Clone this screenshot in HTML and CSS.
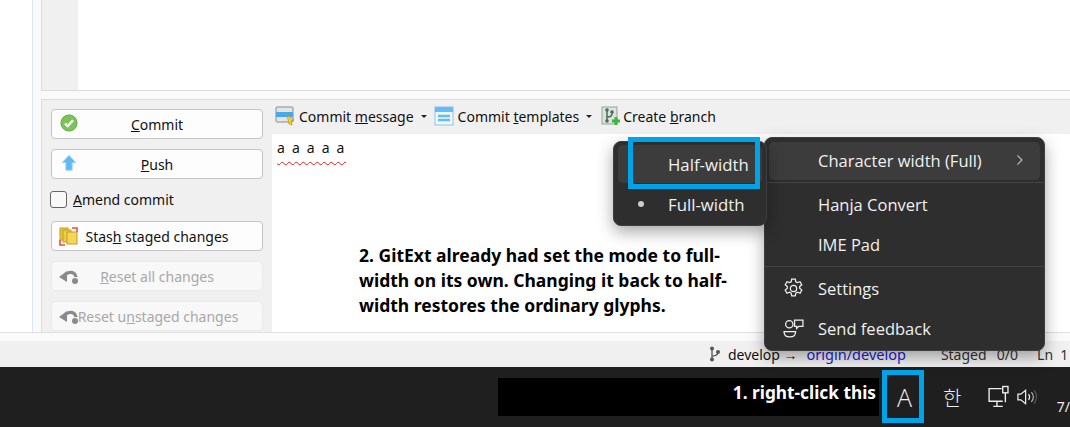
FILE: index.html
```html
<!DOCTYPE html>
<html lang="en">

<head>
    <meta charset="UTF-8">
    <title>GitExt commit form</title>
    <link rel="stylesheet" href="styles.css">
</head>

<body>
    <div class="window">
        <div class="side-strip"></div>
        <div class="main">
            <div class="diff-panel">
                <div class="diff-gutter"></div>
                <div class="diff-body"></div>
            </div>
            <div class="commit-panel">
                <div class="actions">
                    <button class="btn">
                        <svg class="btn-icon" viewBox="0 0 20 20"><circle cx="10" cy="10" r="9" fill="#7cc35a" stroke="#5ea53f"/><path d="M5.500 10.500l3 3 6-6.500" fill="none" stroke="#fff" stroke-width="2.600"/></svg>
                        <span class="btn-label"><u>C</u>ommit</span>
                    </button>
                    <button class="btn">
                        <svg class="btn-icon" viewBox="0 0 20 20"><path d="M10 1.500l7.500 8h-4v8.500h-7v-8.500h-4z" fill="#62b8f5" stroke="#9ad4fb"/></svg>
                        <span class="btn-label"><u>P</u>ush</span>
                    </button>
                    <label class="amend"><span class="check"></span><span><u>A</u>mend commit</span></label>
                    <button class="btn">
                        <svg class="btn-icon wide-icon" viewBox="0 0 20 20"><rect x="1" y="2" width="8" height="12" fill="#e8c53c" stroke="#c39f1e"/><rect x="4" y="4" width="8" height="12" fill="#eccd48" stroke="#c39f1e"/><rect x="8" y="6" width="10" height="12" fill="#f3d755" stroke="#c39f1e"/><path d="M13 2h5v4M1 14v5h5" fill="none" stroke="#ee4a4a" stroke-width="1.600"/></svg>
                        <span class="btn-label">Stas<u>h</u> staged changes</span>
                    </button>
                    <button class="btn disabled">
                        <svg class="btn-icon wide-icon" viewBox="0 0 20 20"><path d="M0 11l8-6v11z" fill="#8a8a8a"/><path d="M7 8c4-3 9-2 10 3" fill="none" stroke="#8a8a8a" stroke-width="3.200"/><circle cx="16" cy="15" r="3" fill="#8a8a8a"/></svg>
                        <span class="btn-label"><u>R</u>eset all changes</span>
                    </button>
                    <button class="btn disabled">
                        <svg class="btn-icon wide-icon" viewBox="0 0 20 20"><path d="M0 11l8-6v11z" fill="#8a8a8a"/><path d="M7 8c4-3 9-2 10 3" fill="none" stroke="#8a8a8a" stroke-width="3.200"/><circle cx="16" cy="15" r="3" fill="#8a8a8a"/></svg>
                        <span class="btn-label reset-label">Reset u<u>n</u>staged changes</span>
                    </button>
                </div>
                <div class="editor">
                    <div class="toolbar">
                        <div class="tool">
                            <svg class="tool-icon" viewBox="0 0 20 20"><rect x="1" y="1" width="17" height="15" rx="1" fill="#e4e4e4" stroke="#8b8b8b"/><rect x="1" y="6" width="17" height="5" fill="#4aa8e8"/><path d="M12 9l7 5-3 1 1 4-3-1z" fill="#f5cf3c" stroke="#a88a17" stroke-width=".6"/></svg>
                            <span>Commit <u>m</u>essage</span>
                            <i class="caret"></i>
                        </div>
                        <div class="tool">
                            <svg class="tool-icon" viewBox="0 0 20 20"><rect x="1" y="1" width="18" height="18" fill="#eef7fe" stroke="#8fc4ea"/><rect x="1" y="1" width="18" height="5" fill="#66bdf6"/><path d="M4 10h12M4 14h12" stroke="#66bdf6" stroke-width="2.500"/></svg>
                            <span>Commit <u>t</u>emplates</span>
                            <i class="caret"></i>
                        </div>
                        <div class="tool tool-branch">
                            <svg class="tool-icon" viewBox="0 0 20 20"><rect x="1" y="1" width="15" height="17" fill="#d9e5dc" stroke="#97a39a"/><path d="M6 4v11M6 11c5 0 5-2 5-4" fill="none" stroke="#4f6b57" stroke-width="1.500"/><circle cx="6" cy="4" r="1.800" fill="#4f6b57"/><circle cx="6" cy="15" r="1.800" fill="#4f6b57"/><circle cx="11" cy="6" r="1.800" fill="#4f6b57"/><path d="M15 11v8M11 15h8" stroke="#3cb53c" stroke-width="3"/></svg>
                            <span>Create <u>b</u>ranch</span>
                        </div>
                    </div>
                    <div class="message"><span class="typed">a a a a a</span></div>
                </div>
            </div>
        </div>
    </div>

    <div class="statusbar">
        <svg class="branch-icon" viewBox="0 0 12 16"><path d="M3 2v12M3 10c5 0 6-2 6-4" fill="none" stroke="#555" stroke-width="1.300"/><circle cx="3" cy="2.500" r="2" fill="#555"/><circle cx="3" cy="13.500" r="2" fill="#555"/><circle cx="9" cy="6" r="2" fill="#555"/></svg>
        <span class="branch">develop →</span>
        <a class="remote">origin/develop</a>
        <span class="staged">Staged&nbsp; 0/0</span>
        <span class="line-no">Ln&nbsp; 1</span>
    </div>

    <div class="taskbar">
        <div class="note-one">1. right-click this</div>
        <div class="tray tray-a">A</div>
        <div class="tray tray-han">한</div>
        <svg class="tray-net" viewBox="0 0 22 22"><path d="M14 3H2v12h13M6 20h9M9.500 15v5" fill="none" stroke="#eee" stroke-width="1.300"/><rect x="15" y="1" width="5" height="6" fill="none" stroke="#eee" stroke-width="1.300"/><path d="M17.500 7v9" stroke="#eee" stroke-width="1.300"/></svg>
        <svg class="tray-vol" viewBox="0 0 22 22"><path d="M2 8h3l5-4v14l-5-4H2z" fill="none" stroke="#eee" stroke-width="1.300"/><path d="M13 8c1.500 2 1.500 4 0 6" fill="none" stroke="#eee" stroke-width="1.300"/><path d="M16 6c2.500 3 2.500 7 0 10" fill="none" stroke="#aaa" stroke-width="1.300"/><path d="M19 4c3 4 3 10 0 14" fill="none" stroke="#555" stroke-width="1.300"/></svg>
        <span class="clock">7/</span>
    </div>

    <!-- IME menus and the notes drawn over the screenshot -->
    <div class="menu context-menu">
        <div class="menu-item active">Character width (Full)
            <svg class="chevron" viewBox="0 0 8 12"><path d="M1.500 1.500l4.500 4.500-4.500 4.500" fill="none" stroke="#bbb" stroke-width="1.100"/></svg>
        </div>
        <div class="menu-line"></div>
        <div class="menu-item">Hanja Convert</div>
        <div class="menu-item">IME Pad</div>
        <div class="menu-line"></div>
        <div class="menu-item">
            <svg class="menu-icon" viewBox="0 0 20 20"><path d="M8.300 1h3.400l.5 2.600 1.500.8 2.500-.9 1.700 3-2 1.700v1.600l2 1.700-1.700 3-2.500-.9-1.500.8-.5 2.600H8.300l-.5-2.600-1.500-.8-2.500.9-1.700-3 2-1.700V8.200l-2-1.700 1.700-3 2.500.9 1.500-.8z" fill="none" stroke="#eee" stroke-width="1.200"/><circle cx="10" cy="10" r="3" fill="none" stroke="#eee" stroke-width="1.200"/></svg>
            Settings
        </div>
        <div class="menu-item">
            <svg class="menu-icon" viewBox="0 0 20 20"><circle cx="6" cy="6" r="3.500" fill="none" stroke="#eee" stroke-width="1.200"/><path d="M11 2h8v6h-4l-2 2V8h-2zM1 13h11c0 3-2 5-5.500 5S1 16 1 13z" fill="none" stroke="#eee" stroke-width="1.200"/></svg>
            Send feedback
        </div>
    </div>

    <div class="menu submenu">
        <div class="menu-item active">Half-width</div>
        <div class="menu-item"><span class="dot"></span>Full-width</div>
    </div>

    <div class="highlight highlight-half"></div>
    <div class="highlight highlight-a"></div>

    <p class="note-two">2. GitExt already had set the mode to full-width on its own. Changing it back to half-width restores the ordinary glyphs.</p>
</body>

</html>
```

FILE: styles.css
```css
html, body {
    margin: 0;
    padding: 0;
}

body {
    width: 1070px;
    height: 427px;
    overflow: hidden;
    position: relative;
    background-color: #fff;
    color: #111;
    font-family: "Noto Sans", Arial, sans-serif;
    font-size: 14px;
}

.window {
    height: 333px;
    padding-left: 32px;
    box-sizing: border-box;
    display: flex;
    border-bottom: 1px solid #e0e0e0;
}

.side-strip {
    width: 1px;
    background-color: #dce6f2;
}

.main {
    flex: 1;
    padding-left: 8px;
    background-color: #fafafa;
    display: flex;
    flex-direction: column;
}

.diff-panel {
    height: 91px;
    box-sizing: border-box;
    display: flex;
    border-left: 1px solid #dcdcdc;
    border-bottom: 1px solid #dcdcdc;
}

.diff-gutter {
    width: 36px;
    background-color: #f0f0f0;
}

.diff-body {
    flex: 1;
    background-color: #fff;
}

.commit-panel {
    margin-top: 8px;
    flex: 1;
    display: flex;
    background-color: #f0f0f0;
    border-top: 1px solid #dcdcdc;
    border-left: 1px solid #dcdcdc;
}

.actions {
    width: 230px;
    flex: none;
    padding: 9px 0 0 9px;
    box-sizing: border-box;
    display: flex;
    flex-direction: column;
    gap: 10px;
    overflow: hidden;
}

.btn {
    width: 212px;
    height: 30px;
    flex: none;
    position: relative;
    padding: 0;
    background-color: #fdfdfd;
    border: 1px solid #c4c4c4;
    border-radius: 4px;
    font-family: inherit;
    font-size: 14px;
    color: #111;
    text-align: center;
}

.btn.disabled {
    background-color: #f8f8f8;
    border-color: #eaeaea;
    color: #a8a8a8;
}

.btn-icon {
    position: absolute;
    left: 8px;
    top: 4px;
    width: 18px;
    height: 18px;
}

.wide-icon {
    left: 7px;
    width: 20px;
    height: 20px;
}

.reset-label {
    margin-left: 2px;
}

.amend {
    display: flex;
    align-items: center;
    gap: 6px;
    height: 22px;
    box-sizing: border-box;
    padding-bottom: 2px;
    flex: none;
    margin-left: -1px;
}

.check {
    width: 15px;
    height: 15px;
    background-color: #f8f8f8;
    border: 1px solid #666;
    border-radius: 3px;
}

.editor {
    flex: 1;
    min-width: 0;
    display: flex;
    flex-direction: column;
}

.toolbar {
    height: 34px;
    padding: 0 0 2px 3px;
    box-sizing: border-box;
    display: flex;
    align-items: center;
    gap: 5px;
    white-space: nowrap;
}

.tool {
    display: flex;
    align-items: center;
    flex: none;
}

.tool-branch {
    margin-left: 2px;
}

.tool-branch .tool-icon {
    margin-right: 2px;
}

.tool-icon {
    width: 20px;
    height: 20px;
    margin-right: 4px;
}

.caret {
    width: 0;
    height: 0;
    margin: 0 2px 0 7px;
    border-left: 3px solid transparent;
    border-right: 3px solid transparent;
    border-top: 3px solid #222;
}

.message {
    flex: 1;
    background-color: #fff;
    padding: 4px 1px;
}

.typed {
    padding: 0 1px 0 4px;
    letter-spacing: 1.700px;
    text-decoration: underline wavy #e02020 1px;
    text-underline-offset: 8px;
}

.statusbar {
    height: 34px;
    background-color: #f0f0f0;
    border-top: 8px solid #fafafa;
    display: flex;
    align-items: center;
    padding-left: 709px;
    box-sizing: border-box;
    white-space: pre;
}

.branch-icon {
    width: 12px;
    height: 16px;
    margin-right: 7px;
}

.remote {
    margin-left: 9px;
    color: #2020d8;
    font-size: 14.500px;
}

.staged {
    margin-left: 35px;
    color: #333;
    word-spacing: 1.500px;
}

.line-no {
    margin-left: 19px;
    color: #333;
}

.taskbar {
    height: 60px;
    background-color: #1f1f1f;
    position: relative;
    display: flex;
    align-items: center;
    padding-left: 889px;
    box-sizing: border-box;
    color: #eee;
}

.note-one {
    position: absolute;
    left: 498px;
    top: 11px;
    width: 381px;
    height: 38px;
    padding-right: 3px;
    box-sizing: border-box;
    background-color: #000;
    color: #fff;
    font-weight: 700;
    font-size: 17.300px;
    line-height: 30px;
    text-align: right;
}

.tray {
    width: 32px;
    text-align: center;
}

.tray-a {
    font-family: "Open Sans", sans-serif;
    font-weight: 300;
    font-size: 25px;
}

.tray-han {
    margin-left: 17px;
    font-family: "Noto Sans CJK KR", sans-serif;
    font-weight: 300;
    font-size: 20px;
}

.tray-net {
    width: 24px;
    height: 24px;
    margin-left: 19px;
}

.tray-vol {
    width: 22px;
    height: 22px;
    margin-left: 6px;
}

.clock {
    margin-left: 20px;
    margin-top: 18px;
    font-size: 14px;
}

.menu {
    position: absolute;
    background-color: #2e2e2e;
    border: 1px solid #3e3e3e;
    border-radius: 8px;
    box-shadow: 0 6px 16px rgba(0, 0, 0, 0.35);
    box-sizing: border-box;
    color: #f0f0f0;
    font-family: "Open Sans", sans-serif;
    font-size: 16.500px;
}

.submenu {
    left: 613px;
    top: 141px;
    width: 154px;
    height: 85px;
    padding: 3px 4px;
    font-size: 16.800px;
}

.context-menu {
    left: 764px;
    top: 137px;
    width: 281px;
    height: 214px;
    padding: 4px;
}

.menu-item {
    height: 38px;
    box-sizing: border-box;
    padding: 0 0 2px 49px;
    margin-bottom: 2px;
    border-radius: 5px;
    display: flex;
    align-items: center;
    position: relative;
}

.submenu .menu-item {
    padding: 0 0 0 50px;
}

.menu-item.active {
    background-color: #3c3c3c;
}

.menu-line {
    height: 1px;
    margin: 0 -4px 3px;
    background-color: #444;
}

.dot {
    position: absolute;
    left: 20px;
    top: 16px;
    width: 6px;
    height: 6px;
    border-radius: 50%;
    background-color: #ccc;
}

.chevron {
    position: absolute;
    right: 16px;
    top: 12px;
    width: 8px;
    height: 12px;
}

.menu-icon {
    position: absolute;
    left: 14px;
    top: 8px;
    width: 21px;
    height: 21px;
}

.highlight {
    position: absolute;
    border: 5px solid #00a2e8;
    box-sizing: border-box;
}

.highlight-half {
    left: 628px;
    top: 137px;
    width: 132px;
    height: 52px;
}

.highlight-a {
    left: 882px;
    top: 370px;
    width: 42px;
    height: 53px;
}

.note-two {
    position: absolute;
    left: 359px;
    top: 243px;
    width: 375px;
    margin: 0;
    color: #000;
    font-weight: 700;
    font-size: 17.500px;
    line-height: 25px;
}
```
